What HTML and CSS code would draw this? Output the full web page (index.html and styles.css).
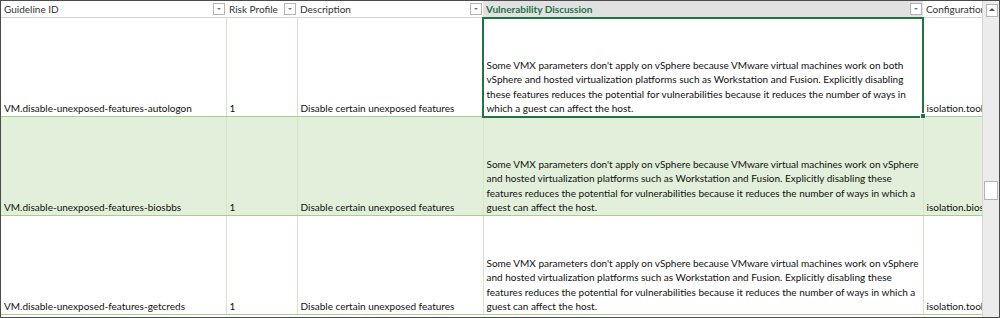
FILE: index.html
```html
<!DOCTYPE html>
<html lang="en">
<head>
    <meta charset="UTF-8">
    <title>Guidelines</title>
    <link rel="stylesheet" href="styles.css">
</head>
<body>
    <div class="frame">
        <div class="sheet">
            <table>
                <colgroup>
                    <col class="c-id">
                    <col class="c-risk">
                    <col class="c-desc">
                    <col class="c-disc">
                    <col class="c-conf">
                </colgroup>
                <thead>
                    <tr>
                        <th><div class="head"><span class="label">Guideline ID</span><span class="drop"></span></div></th>
                        <th><div class="head"><span class="label">Risk Profile</span><span class="drop"></span></div></th>
                        <th><div class="head"><span class="label">Description</span><span class="drop"></span></div></th>
                        <th class="active"><div class="head"><span class="label">Vulnerability Discussion</span><span class="drop"></span></div></th>
                        <th><div class="head"><span class="label clip">Configuration Parameter</span></div></th>
                    </tr>
                </thead>
                <tbody>
                    <tr class="row-a">
                        <td>VM.disable-unexposed-features-autologon</td>
                        <td>1</td>
                        <td>Disable certain unexposed features</td>
                        <td class="selected">Some VMX parameters don't apply on vSphere because VMware virtual machines work on both<br>vSphere and hosted virtualization platforms such as Workstation and Fusion. Explicitly disabling<br>these features reduces the potential for vulnerabilities because it reduces the number of ways in<br>which a guest can affect the host.</td>
                        <td class="clip">isolation.tools.ghi.autologon.disable</td>
                    </tr>
                    <tr class="row-b">
                        <td>VM.disable-unexposed-features-biosbbs</td>
                        <td>1</td>
                        <td>Disable certain unexposed features</td>
                        <td>Some VMX parameters don't apply on vSphere because VMware virtual machines work on vSphere<br>and hosted virtualization platforms such as Workstation and Fusion. Explicitly disabling these<br>features reduces the potential for vulnerabilities because it reduces the number of ways in which a<br>guest can affect the host.</td>
                        <td class="clip">isolation.bios.bbs.disable</td>
                    </tr>
                    <tr class="row-c">
                        <td>VM.disable-unexposed-features-getcreds</td>
                        <td>1</td>
                        <td>Disable certain unexposed features</td>
                        <td>Some VMX parameters don't apply on vSphere because VMware virtual machines work on vSphere<br>and hosted virtualization platforms such as Workstation and Fusion. Explicitly disabling these<br>features reduces the potential for vulnerabilities because it reduces the number of ways in which a<br>guest can affect the host.</td>
                        <td class="clip">isolation.tools.getCreds.disable</td>
                    </tr>
                </tbody>
            </table>
        </div>
        <div class="scrollbar">
            <span class="arrow"></span>
            <span class="thumb"></span>
        </div>
    </div>
</body>
</html>
```

FILE: styles.css
```css
body {
    margin: 0;
    font-family: Lato, "Open Sans", sans-serif;
    font-size: 10px;
    color: #111;
}
.frame {
    width: 1000px;
    height: 318px;
    box-sizing: border-box;
    border: 1px solid #4b4b4b;
    display: flex;
    overflow: hidden;
}
.sheet {
    flex: 1;
    overflow: hidden;
    background: #fff;
}
table {
    table-layout: fixed;
    border-collapse: collapse;
    width: 982px;
}
.c-id { width: 225px; }
.c-risk { width: 71px; }
.c-desc { width: 186px; }
.c-disc { width: 440px; }
.c-conf { width: 60px; }
th {
    height: 16px;
    padding: 0;
    font-weight: normal;
    text-align: left;
    color: #333;
    border-bottom: 1px solid #d6d6d6;
}
.head {
    display: flex;
    align-items: center;
    height: 16px;
    padding-left: 3px;
    padding-right: 1px;
}
.label {
    flex: 1;
    white-space: nowrap;
    overflow: hidden;
}
th.active {
    background: #e1e1e1;
}
th.active .label {
    color: #217346;
    font-weight: bold;
}
.drop {
    width: 10px;
    height: 10px;
    border: 1px solid #b4b4b4;
    background: #fff;
    position: relative;
}
.drop::after {
    content: "";
    position: absolute;
    left: 3px;
    top: 4px;
    border-left: 2px solid transparent;
    border-right: 2px solid transparent;
    border-top: 2px solid #777;
}
td {
    padding: 0 3px 0 3px;
    vertical-align: bottom;
    line-height: 14.6px;
    white-space: nowrap;
    border-left: 1px solid #d6e6cb;
    border-right: 1px solid #d6e6cb;
    border-bottom: 1px solid #a9cf8f;
}
td:first-child {
    border-left: none;
}
.row-a td { height: 98px; }
.row-b td { height: 98px; background: #e2efda; }
.row-c td { height: 98px; }
td.clip {
    overflow: hidden;
    text-overflow: clip;
    padding-right: 0;
}
td.selected {
    position: relative;
    outline: 2px solid #217346;
    outline-offset: -1px;
}
td.selected::after {
    content: "";
    position: absolute;
    right: -3px;
    bottom: -3px;
    width: 4px;
    height: 4px;
    background: #217346;
    border: 1px solid #fff;
}
.scrollbar {
    width: 16px;
    background: #ececec;
    border-left: 1px solid #d4d4d4;
    position: relative;
}
.arrow {
    position: absolute;
    left: 3px;
    top: 3px;
    width: 10px;
    height: 11px;
    border: 1px solid #b4b4b4;
    background: #fff;
}
.arrow::after {
    content: "";
    position: absolute;
    left: 2px;
    top: 3px;
    border-left: 3px solid transparent;
    border-right: 3px solid transparent;
    border-bottom: 3px solid #555;
}
.thumb {
    position: absolute;
    left: 1px;
    top: 180px;
    width: 12px;
    height: 17px;
    border: 1px solid #b4b4b4;
    background: #fff;
}
```
